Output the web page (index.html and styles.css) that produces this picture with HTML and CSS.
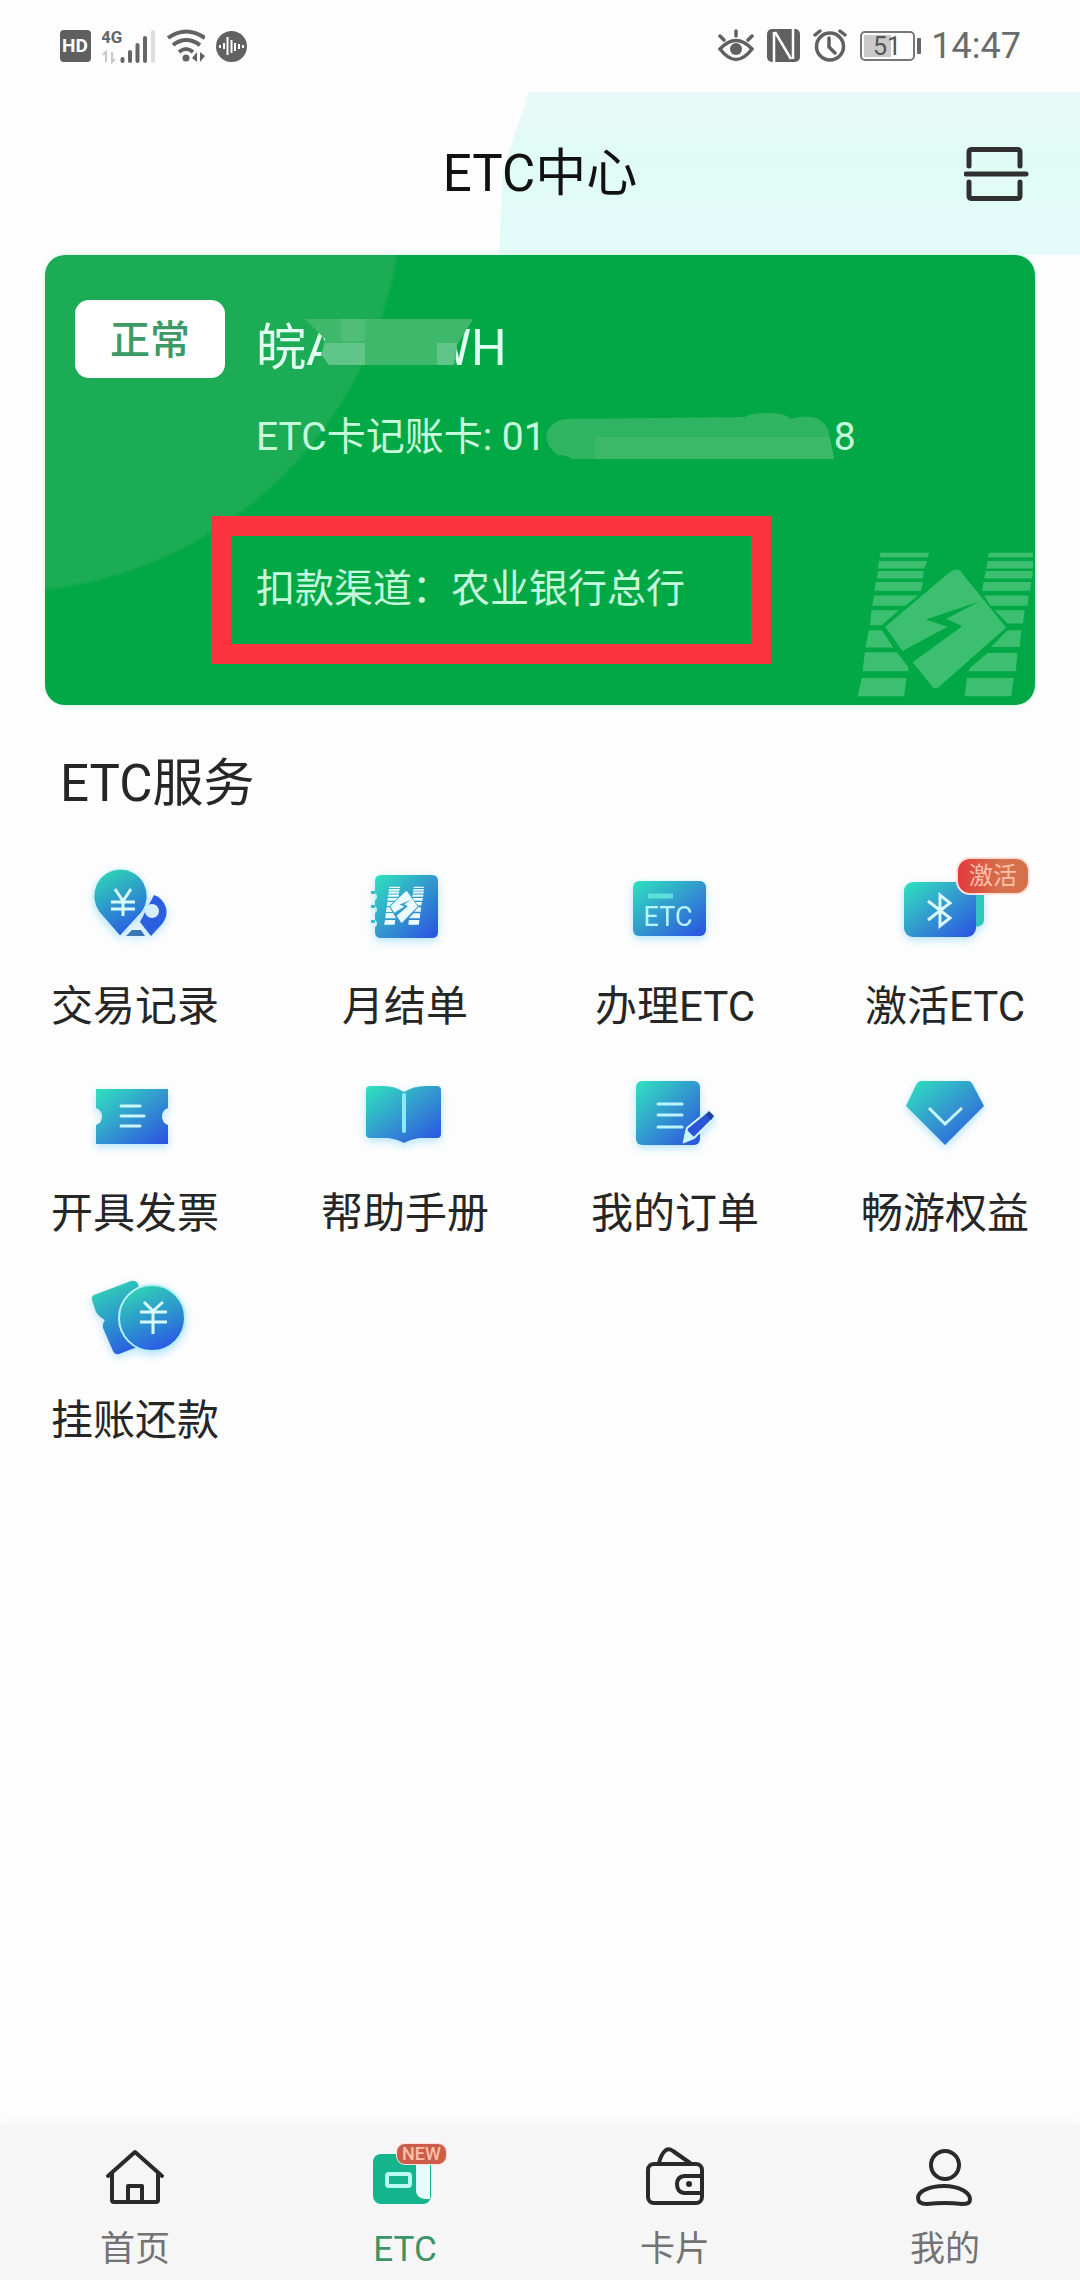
FILE: index.html
```html
<!DOCTYPE html>
<html lang="zh-CN">
<head>
<meta charset="utf-8">
<meta name="viewport" content="width=device-width, initial-scale=1">
<title>ETC中心</title>
<link rel="stylesheet" href="styles.css">
</head>
<body>
<svg class="defs" aria-hidden="true">
  <defs>
    <linearGradient id="blue" x1="0" y1="0" x2="1" y2="1">
      <stop offset="0.05" stop-color="#2fdcc0"/>
      <stop offset="0.5" stop-color="#3398cf"/>
      <stop offset="1" stop-color="#2a4fe2"/>
    </linearGradient>
    <linearGradient id="blueDown" x1="0.2" y1="0" x2="0.6" y2="1">
      <stop offset="0.1" stop-color="#2fcbb8"/>
      <stop offset="1" stop-color="#2a5be4"/>
    </linearGradient>
    <g id="road">
      <path d="M988 938H1130L1126 952H985ZM984 963H1124L1116 985H981ZM981 993H1114L1112 1015H978ZM975 1026H1112L1106 1052H970ZM970 1066H1098L1060 1097H964ZM962 1110H1042L992 1155H958ZM954 1170H992L1026 1222H945ZM943 1236H1036L1070 1282L1068 1293H936ZM934 1313H1064L1057 1368H922Z"/>
      <path d="M1304 938H1432V952H1300ZM1300 963H1432V985H1296ZM1295 993H1432L1430 1015H1290ZM1288 1026H1427L1424 1052H1284ZM1290 1066H1420L1416 1097H1308ZM1320 1110H1408L1403 1150H1358ZM1358 1170H1398L1393 1220H1310ZM1300 1238H1387L1382 1293H1244L1250 1282ZM1240 1313H1376L1369 1368H1233Z"/>
      <path d="M1002 1160L1180 1005Q1215 975 1226 1000L1354 1162L1158 1340Q1148 1350 1138 1338L1082 1266L1226 1158L1180 1136L1276 1084L1120 1138L1184 1160L1052 1232Z"/>
    </g>
  </defs>
</svg>

<div class="status">
  <div class="status-group">
    <svg width="31" height="32" viewBox="0 0 31 32"><rect width="31" height="32" rx="4" fill="#5f5f5f"/><text x="15" y="22" text-anchor="middle" class="hd">HD</text></svg>
    <svg width="54" height="36" viewBox="103 26 54 36"><text x="102" y="41" class="g4">4G</text><path d="M107 60V50l-3 3M113 50v10l3-3" stroke="#c9c9c9" stroke-width="2" fill="none"/><g stroke="#666" stroke-width="4" stroke-linecap="round"><path d="M123.500 57v2M131 50v9M138.500 43v16M146 36v23"/><path stroke="#dedede" d="M154 30v29"/></g></svg>
    <svg width="38" height="34" viewBox="166 28 38 34" fill="none" stroke="#626262" stroke-width="4"><path d="M167 37Q185 24 204 37M172 44Q185 34 199 44M178 51Q185 45 192 51"/><circle cx="185" cy="57" r="3.500" fill="#626262" stroke="none"/><path d="M196 51v10l-5-4ZM199 51v10l5-6Z" fill="#626262" stroke="none"/></svg>
    <svg width="31" height="31" viewBox="0 0 31 31"><circle cx="15.500" cy="15.500" r="15.500" fill="#626262"/><path d="M4 14v3M8 12v6M11.500 6v18M15.500 9v13M19 12v8M23 13v5M27 14v3" stroke="#fff" stroke-width="2"/></svg>
  </div>
  <div class="status-group status-right">
    <svg width="36" height="34" viewBox="718 29 36 34" fill="none" stroke="#606060" stroke-width="3.500"><path d="M720 49Q736 32 752 49Q736 70 720 49Z"/><circle cx="736" cy="49" r="6" fill="#606060" stroke="none"/><path d="M736 31v5M720 36l4 4M752 36l-4 4" stroke-linecap="round"/></svg>
    <svg width="33" height="34" viewBox="0 0 33 34"><rect width="33" height="33" rx="5" fill="#606060"/><path d="M7 33V3M8 3L24 30M26 0V30" fill="none" stroke="#fdfdfd" stroke-width="2.500"/><path d="M12 13V33H16L19 26ZM21 20V0H17L14 7Z" fill="#606060"/></svg>
    <svg width="34" height="34" viewBox="811 29 34 34" fill="none" stroke="#606060" stroke-width="3.500"><circle cx="828" cy="46.500" r="13.500"/><path d="M827 38v9l6 6M813 35l5-4M838 31l5 4" stroke-linecap="round"/></svg>
    <svg width="62" height="30" viewBox="0 0 62 30"><rect x="1" y="1" width="53" height="28" rx="4" fill="none" stroke="#777" stroke-width="2"/><rect x="4" y="4" width="27" height="22" fill="#c9c9c9"/><rect x="57" y="7" width="4" height="16" rx="1" fill="#666"/><text x="27" y="24" text-anchor="middle" class="level">51</text></svg>
    <time class="clock">14:47</time>
  </div>
</div>

<header class="header">
  <h1 class="header-title">ETC中心</h1>
  <button class="scan" type="button" aria-label="扫一扫">
    <svg width="65" height="56" viewBox="0 0 65 56" fill="none" stroke="#303030" stroke-width="5" stroke-linecap="round"><path d="M5 20V6Q5 3.500 8 3.500H53Q56 3.500 56 6V20M5 36V50Q5 52.500 8 52.500H53Q56 52.500 56 50V36M2 28H62"/></svg>
  </button>
</header>

<main class="main">
  <section class="card">
    <svg class="card-logo" viewBox="920 930 515 440" preserveAspectRatio="none" aria-hidden="true"><use href="#road" fill="#3cbf70"/></svg>
    <span class="card-state">正常</span>
    <div class="card-info">
      <p class="plate"><span>皖A</span><span>WH</span>
        <svg class="plate-mask" width="168" height="46" viewBox="0 0 168 46"><path d="M0 0H168L152 26 150 46H24L16 36 20 20Z" fill="#40b86c"/><path d="M36 0H60V22H36Z" fill="#50bd78"/><path d="M132 24H152L148 46H132ZM20 24H60V46H24L17 36Z" fill="#5fc589"/></svg>
      </p>
      <p class="account"><span>ETC卡记账卡: 01</span>
        <svg class="account-mask" viewBox="0 0 290 48" preserveAspectRatio="none"><path d="M20 6L200 4Q206 0 222 0 242 0 246 6 274 -2 284 16L290 46H26Q22 42 12 42 0 34 0 22 4 8 20 6Z" fill="#2fb461"/><path d="M50 24H286L290 46H50Z" fill="#3cb86a"/></svg>
        <span>8</span>
      </p>
      <p class="channel">扣款渠道：农业银行总行</p>
    </div>
  </section>

  <h2 class="section-title">ETC服务</h2>
  <nav class="services" aria-label="ETC服务">
    <a class="service" href="#records">
      <svg class="service-icon" viewBox="80 850 110 110"><path d="M154 895A18 18 0 0 1 162 924L151 936L140 922Z" fill="#2b5fe0"/><circle cx="152" cy="911" r="7" fill="#d5efff"/><path d="M120 869A27 27 0 0 1 142 912L120 936L99 912A27 27 0 0 1 120 869Z" fill="url(#blueDown)" stroke="#d9f7ff" stroke-width="1"/><path d="M132 930h9l4 6h-19Z" fill="#3978b4"/><path d="M115 889l8 12 8-12M111 902h24M111 909h24M123 901v15" fill="none" stroke="#d7fbff" stroke-width="3"/></svg>
      <span>交易记录</span>
    </a>
    <a class="service" href="#bill">
      <svg class="service-icon" viewBox="350 850 110 110"><path d="M381 875H432Q438 875 438 881V932Q438 938 432 938H381Q375 938 375 932V927A4 4 0 0 0 375 920V913A4 4 0 0 0 375 906V900A4 4 0 0 0 375 893V881Q375 875 381 875Z" fill="url(#blue)"/><path d="M371 891h4v3h-4ZM371 905h4v3h-4ZM371 920h4v3h-4Z" fill="#35bfc4"/><svg x="384" y="886" width="40" height="39" viewBox="920 930 515 440" preserveAspectRatio="none"><use href="#road" fill="#eafcff"/></svg></svg>
      <span>月结单</span>
    </a>
    <a class="service" href="#apply">
      <svg class="service-icon" viewBox="620 850 110 110"><rect x="633" y="881" width="73" height="55" rx="6" fill="url(#blue)"/><path d="M648 896h25" stroke="#5edfd9" stroke-width="5"/><text x="668" y="926" text-anchor="middle" class="etc">ETC</text></svg>
      <span>办理ETC</span>
    </a>
    <a class="service" href="#activate">
      <svg class="service-icon" viewBox="890 850 110 110"><path d="M970 890H979Q984 890 984 896V920Q984 927 974 927Z" fill="#31c5bf"/><rect x="904" y="882" width="72" height="55" rx="9" fill="url(#blue)"/><path d="M928 901l22 17-10 8V895l10 8-22 17" fill="none" stroke="#dcf9ff" stroke-width="3"/></svg>
      <em class="tag">激活</em>
      <span>激活ETC</span>
    </a>
    <a class="service" href="#invoice">
      <svg class="service-icon" viewBox="80 1057 110 110"><path d="M96 1089H168V1108A9 9 0 0 0 168 1125V1144H96V1125A9 9 0 0 0 96 1108Z" fill="url(#blue)"/><path d="M121 1106h19M121 1116h23M121 1126h19" stroke="#c9f6ff" stroke-width="3" stroke-linecap="round"/></svg>
      <span>开具发票</span>
    </a>
    <a class="service" href="#help">
      <svg class="service-icon" viewBox="350 1057 110 110"><path d="M371 1086H384Q395 1086 404 1092 413 1086 426 1086H437Q441 1086 441 1090V1134Q441 1138 437 1138H420Q411 1139 404 1143 397 1139 388 1138H370Q366 1138 366 1134V1090Q366 1086 371 1086Z" fill="url(#blue)"/><path d="M404 1095v36" stroke="#8beaf8" stroke-width="4" stroke-linecap="round"/></svg>
      <span>帮助手册</span>
    </a>
    <a class="service" href="#orders">
      <svg class="service-icon" viewBox="620 1057 110 110"><rect x="636" y="1081" width="64" height="64" rx="6" fill="url(#blue)"/><path d="M658 1104h24M658 1115h24M658 1127h24" stroke="#b9f4ff" stroke-width="3" stroke-linecap="round"/><path d="M684 1142l3-14 21-17 6 7-20 20Z" fill="#2a55d6" stroke="#d7f7ff" stroke-width="2"/><path d="M683 1143l3-14 9 9Z" fill="#c8f4ff"/><path d="M706 1115l3-4 5 5-3 4Z" fill="#1e3f9e"/></svg>
      <span>我的订单</span>
    </a>
    <a class="service" href="#rights">
      <svg class="service-icon" viewBox="890 1057 110 110"><path d="M921 1081H968Q971 1081 973 1085L984 1106 945 1145 906 1106 916 1085Q918 1081 921 1081Z" fill="url(#blue)"/><path d="M929 1108l16 16 17-16" fill="none" stroke="#c9f8ff" stroke-width="3"/></svg>
      <span>畅游权益</span>
    </a>
    <a class="service" href="#repay">
      <svg class="service-icon" viewBox="80 1264 110 110"><path d="M94 1295L131 1281Q136 1280 138 1284L150 1342 119 1354Q115 1355 113 1351L103 1328Q102 1324 105 1320 98 1316 96 1312L92 1300Q91 1297 94 1295Z" fill="url(#blueDown)"/><circle cx="152" cy="1318" r="33" fill="url(#blueDown)" stroke="#b5f1f6" stroke-width="2"/><path d="M144 1302l9 9 10-9M140 1312h27M140 1322h27M153 1311v23" fill="none" stroke="#d7fbff" stroke-width="3"/></svg>
      <span>挂账还款</span>
    </a>
  </nav>
</main>

<nav class="tabs" aria-label="主导航">
  <a class="tab" href="#home">
    <svg class="tab-icon" viewBox="90 2140 90 70"><path d="M108 2176L135 2152 162 2176M112 2174V2200Q112 2202 114 2202H156Q158 2202 158 2200V2174M128 2202V2186H142V2202"/></svg>
    <span>首页</span>
  </a>
  <a class="tab tab-current" href="#etc" aria-current="page">
    <svg class="tab-icon" viewBox="360 2140 90 70"><rect x="373" y="2154" width="58" height="50" rx="8" fill="#14b48c" stroke="none"/><path d="M416 2160H430V2199Q416 2200 416 2190Z" fill="#e6fcfa" stroke="none"/><rect x="387" y="2174" width="23" height="12" rx="2" stroke="#b8fbf0"/></svg>
    <em class="tag tag-new">NEW</em>
    <span>ETC</span>
  </a>
  <a class="tab" href="#cards">
    <svg class="tab-icon" viewBox="630 2140 90 70"><rect x="648" y="2164" width="54" height="39" rx="6"/><path d="M659 2163Q661 2154 666 2150 669 2148 673 2151L690 2163M702 2176H684Q677 2177 677 2184 677 2192 684 2193H702"/><circle cx="689" cy="2184" r="3" fill="#2a2a2a" stroke="none"/></svg>
    <span>卡片</span>
  </a>
  <a class="tab" href="#mine">
    <svg class="tab-icon" viewBox="900 2140 90 70"><circle cx="945" cy="2165" r="14"/><path d="M944 2186C960 2186 970 2193 970 2199 970 2204 966 2204 962 2204Q945 2202 927 2204C921 2204 918 2202 918 2198 918 2191 930 2186 944 2186Z"/></svg>
    <span>我的</span>
  </a>
</nav>
</body>
</html>
```
FILE: styles.css
```css
* {
  box-sizing: border-box;
}

body {
  margin: 0;
  min-height: 100vh;
  display: flex;
  flex-direction: column;
  background: #fdfdfd;
  color: #262626;
  font-family: Roboto, "Noto Sans CJK SC", sans-serif;
}

h1, h2, p {
  margin: 0;
  font-weight: 400;
}

a {
  color: inherit;
  text-decoration: none;
}

svg {
  display: block;
  flex: none;
}

.defs {
  position: absolute;
  width: 0;
  height: 0;
}

/* Status bar */
.status {
  height: 92px;
  padding: 0 59px 0 60px;
  display: flex;
  justify-content: space-between;
  align-items: center;
}

.status-group {
  display: flex;
  align-items: center;
  gap: 11px;
}

.status-right {
  gap: 13px;
}

.hd {
  font: 700 19px Roboto, sans-serif;
  fill: #fff;
}

.g4 {
  font: 700 17px Roboto, sans-serif;
  fill: #666;
}

.level {
  font: 400 25px Roboto, sans-serif;
  fill: #555;
}

.clock {
  margin-left: -4px;
  font-size: 36px;
  line-height: 40px;
  color: #6b6b6b;
}

/* Header */
.header {
  position: relative;
  height: 163px;
  padding: 0 51px;
  display: grid;
  grid-template-columns: 1fr auto 1fr;
  align-items: center;
}

.header::before {
  content: "";
  position: absolute;
  inset: 0 0 0 46%;
  z-index: -1;
  background: linear-gradient(#e8f9f8, #e0fbf6 40%, #e4fbf9);
  clip-path: polygon(32px 0, 100% 0, 100% 100%, 2px 100%, 6px 80px, 20px 36px);
}

.header-title {
  grid-column: 2;
  font-size: 51px;
  line-height: 60px;
  color: #111;
}

.scan {
  justify-self: end;
  padding: 0;
  border: 0;
  background: none;
}

/* Vehicle card */
.main {
  flex: 1;
}

.card {
  position: relative;
  margin: 0 45px;
  padding: 45px 30px 41px;
  display: flex;
  align-items: flex-start;
  gap: 31px;
  border-radius: 20px;
  background: radial-gradient(circle at -45px -65px, #1dac56 400px, #02a845 404px);
  box-shadow: 0 0 5px #c8f8dc;
  color: #c6fbdc;
}

.card-logo {
  position: absolute;
  right: 1px;
  bottom: 8px;
  width: 177px;
  height: 147px;
}

.card-state {
  width: 150px;
  height: 78px;
  border-radius: 14px;
  background: #fff;
  color: #3b9a65;
  font-size: 40px;
  font-weight: 500;
  line-height: 82px;
  text-align: center;
}

.card-info {
  padding-top: 13px;
}

.plate {
  position: relative;
  display: flex;
  gap: 88px;
  font-size: 50px;
  line-height: 70px;
  color: #e0fff0;
}

.plate-mask {
  position: absolute;
  left: 49px;
  top: 6px;
}

.account {
  margin-top: 24px;
  display: flex;
  align-items: center;
  font-size: 39px;
  line-height: 60px;
}

.account-mask {
  width: 288px;
  height: 48px;
}

.channel {
  width: fit-content;
  margin: 49px 0 0 -45px;
  padding: 23px 66px 25px 25px;
  border: 20px solid #fd3340;
  font-size: 39px;
  line-height: 60px;
}

/* Services */
.section-title {
  padding: 49px 60px 36px;
  font-size: 51px;
  line-height: 60px;
}

.services {
  display: grid;
  grid-template-columns: repeat(4, 1fr);
  row-gap: 20px;
}

.service {
  position: relative;
  display: flex;
  flex-direction: column;
  align-items: center;
  gap: 17px;
  font-size: 42px;
  line-height: 60px;
}

.service-icon {
  width: 110px;
  height: 110px;
  filter: drop-shadow(0 3px 4px rgba(70, 190, 250, 0.4));
}

.etc {
  font: 400 27px Roboto, sans-serif;
  fill: #b9f5ff;
}

.tag {
  position: absolute;
  left: calc(50% + 11px);
  top: 7px;
  padding: 0 11px;
  border: 2px solid #ffdfda;
  border-radius: 14px;
  background: linear-gradient(90deg, #e23a3a, #d5704c 60%);
  color: #ffc0a8;
  font-size: 24px;
  font-style: normal;
  line-height: 34px;
}

.tag-new {
  left: calc(50% - 9px);
  top: 18px;
  padding: 0 5px;
  border-width: 1px;
  border-radius: 9px;
  background: #cb5d4a;
  font-size: 18px;
  font-weight: 500;
  line-height: 20px;
}

/* Bottom tabs */
.tabs {
  display: grid;
  grid-template-columns: repeat(4, 1fr);
  background: #f6f6f6;
  box-shadow: 0 -3px 8px #f8f8f8;
}

.tab {
  position: relative;
  padding: 15px 0 5px;
  display: flex;
  flex-direction: column;
  align-items: center;
  gap: 15px;
  font-size: 35px;
  line-height: 50px;
  color: #737373;
}

.tab-current {
  color: #3b9468;
}

.tab-icon {
  width: 90px;
  height: 70px;
  fill: none;
  stroke: #2a2a2a;
  stroke-width: 4px;
  stroke-linejoin: round;
  stroke-linecap: round;
}
```
